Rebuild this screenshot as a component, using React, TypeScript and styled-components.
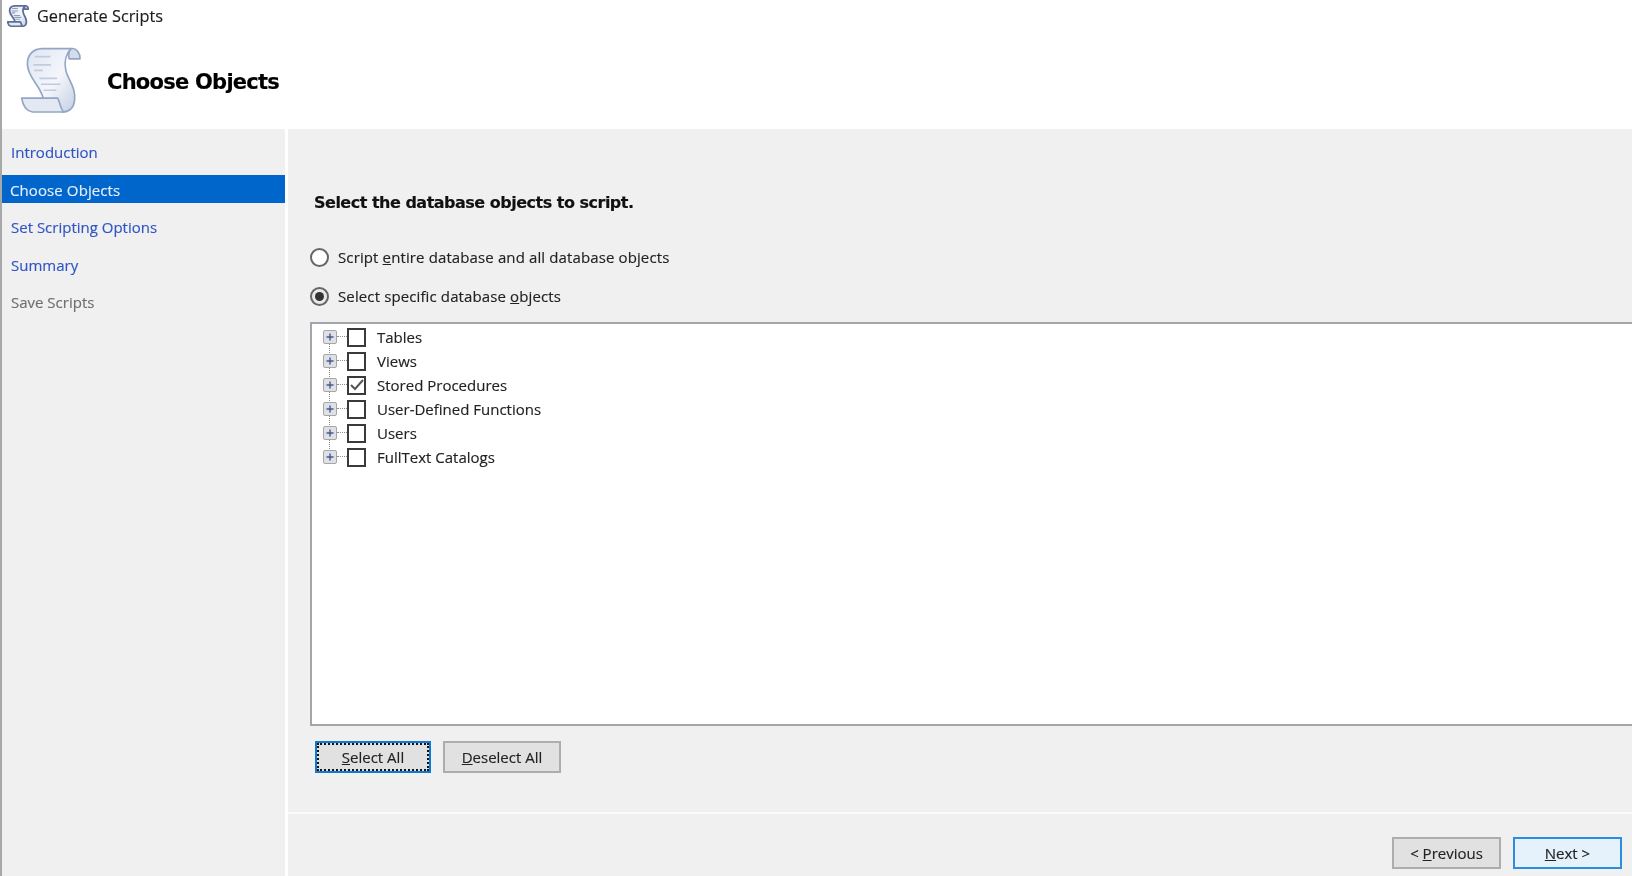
import React from "react";
import styled, { createGlobalStyle } from "styled-components";

const GlobalStyle = createGlobalStyle`
  html, body {
    margin: 0;
    padding: 0;
    height: 100%;
    overflow: hidden;
    background: #ffffff;
  }
  * { box-sizing: border-box; }
`;

const Window = styled.div`
  width: 1632px;
  height: 876px;
  display: flex;
  flex-direction: column;
  overflow: hidden;
  border-left: 2px solid #a8a8a8;
  background: #ffffff;
  font-family: "Open Sans", "Noto Sans", sans-serif;
  font-size: 15px;
  color: #222222;
  -webkit-text-stroke: 0.15px currentColor;
  filter: blur(0.35px);
`;

const TitleBar = styled.div`
  height: 32px;
  display: flex;
  align-items: center;
  gap: 8px;
  padding-left: 5px;
  font-size: 16.3px;
  color: #1c1c1c;
`;

const Header = styled.div`
  height: 97px;
  display: flex;
  align-items: center;
  gap: 25px;
  padding: 0 0 2px 18px;
`;

const PageTitle = styled.h1`
  margin: 4px 0 0;
  font-family: "DejaVu Sans", sans-serif;
  font-size: 21px;
  font-weight: 700;
  color: #000000;
  letter-spacing: -0.75px;
`;

const Body = styled.div`
  flex: 1;
  display: flex;
  gap: 3px;
  min-height: 0;
`;

const Sidebar = styled.nav`
  width: 283px;
  background: #f0f0f0;
  padding-top: 8px;
  display: flex;
  flex-direction: column;
  gap: 9.5px;
`;

const NavItem = styled.div<{ $state?: "active" | "disabled" }>`
  height: 28px;
  display: flex;
  align-items: center;
  padding-top: 2px;
  padding-left: ${(p) => (p.$state === "active" ? "8px" : "9px")};
  letter-spacing: ${(p) => (p.$state === "active" ? "0.1px" : "0")};
  color: ${(p) =>
    p.$state === "active" ? "#e6eefa" : p.$state === "disabled" ? "#6f6f6f" : "#2f55c4"};
  background: ${(p) => (p.$state === "active" ? "#0066cc" : "transparent")};
`;

const Main = styled.main`
  flex: 1;
  min-width: 0;
  background: #f0f0f0;
  display: flex;
  flex-direction: column;
`;

const Content = styled.section`
  height: 685px;
  padding: 64px 0 0 22px;
  margin-right: -8px;
  border-bottom: 2px solid #fbfbfb;
`;

const Heading = styled.h2`
  margin: 0 0 34px 4px;
  height: 20px;
  line-height: 20px;
  font-family: "DejaVu Sans", sans-serif;
  font-size: 16px;
  font-weight: 700;
  letter-spacing: -0.5px;
  color: #111111;
`;

const RadioRow = styled.label`
  height: 20px;
  display: flex;
  align-items: center;
  gap: 9px;
  margin-bottom: 19px;
  letter-spacing: 0.12px;
`;

const RadioDot = styled.span<{ $on?: boolean }>`
  width: 19px;
  height: 19px;
  border-radius: 50%;
  border: 2px solid #666666;
  background: ${(p) => (p.$on ? "#e9e9e9" : "#ffffff")};
  display: flex;
  align-items: center;
  justify-content: center;

  &::after {
    content: "";
    width: 9px;
    height: 9px;
    border-radius: 50%;
    background: ${(p) => (p.$on ? "#333333" : "transparent")};
  }
`;

const TreeBox = styled.div`
  height: 404px;
  margin-top: -3px;
  background: #ffffff;
  border: 2px solid #a2a5a9;
  padding: 1px 0 0 11px;
`;

const TreeRow = styled.div`
  height: 24px;
  display: flex;
  align-items: center;
  line-height: 24px;
`;

const Expander = styled.span<{ $last?: boolean }>`
  position: relative;
  width: 14px;
  height: 14px;
  flex: none;
  border: 1px solid #a6a6a6;
  border-radius: 2px;
  background: #dfe0e5;
  color: #44598f;
  display: flex;
  align-items: center;
  justify-content: center;
  margin-right: 10px;

  &::before {
    content: "";
    position: absolute;
    left: 13px;
    top: 5px;
    width: 10px;
    border-top: 1px dotted #8a8a8a;
  }

  &::after {
    content: "";
    display: ${(p) => (p.$last ? "none" : "block")};
    position: absolute;
    left: 5px;
    top: 13px;
    height: 11px;
    border-left: 1px dotted #8a8a8a;
  }
`;

const CheckBox = styled.span`
  width: 19px;
  height: 19px;
  flex: none;
  border: 2px solid #3a3a3a;
  background: #ffffff;
  margin-right: 11px;
  display: flex;
  align-items: center;
  justify-content: center;
`;

const ButtonRow = styled.div`
  display: flex;
  gap: 12px;
  margin: 15px 0 0 5px;
`;

const Button = styled.button<{ $tone?: "focus" | "hover"; $width: number }>`
  position: relative;
  width: ${(p) => p.$width}px;
  height: 32px;
  padding: 0;
  font: inherit;
  color: #222222;
  cursor: default;
  background: ${(p) => (p.$tone === "hover" ? "#e5f1fb" : "#e1e1e1")};
  border: 2px solid
    ${(p) => (p.$tone === "hover" ? "#2a8de0" : p.$tone === "focus" ? "#0f7ad6" : "#adadad")};

  ${(p) =>
    p.$tone === "focus" &&
    `&::after {
      content: "";
      position: absolute;
      inset: 0;
      border: 2px dotted #111111;
    }`}
`;

const Footer = styled.footer`
  flex: 1;
  display: flex;
  justify-content: flex-end;
  gap: 12px;
  padding: 23px 10px 0 0;
`;

const NAV: { label: string; state?: "active" | "disabled" }[] = [
  { label: "Introduction" },
  { label: "Choose Objects", state: "active" },
  { label: "Set Scripting Options" },
  { label: "Summary" },
  { label: "Save Scripts", state: "disabled" },
];

const TREE = [
  { label: "Tables" },
  { label: "Views" },
  { label: "Stored Procedures", checked: true },
  { label: "User-Defined Functions" },
  { label: "Users" },
  { label: "FullText Catalogs" },
];

function ScrollIcon({ width, height, dark }: { width: number; height: number; dark?: boolean }) {
  const id = dark ? "scrollSmall" : "scrollLarge";
  const stroke = dark ? "#5f7097" : "#94a5c6";
  const sw = dark ? 15 : 5;
  return (
    <svg
      width={width}
      height={height}
      viewBox="60 138 184 206"
      preserveAspectRatio="none"
      style={{ flex: "none" }}
    >
      <defs>
        <linearGradient id={id} x1="0" y1="0" x2="1" y2="1">
          <stop offset="0" stopColor="#dfe5f2" />
          <stop offset="0.55" stopColor="#f4f6fb" />
          <stop offset="1" stopColor="#c3cfe4" />
        </linearGradient>
      </defs>
      <path
        d="M125 146 L212 146 C197 160 190 185 196 212 C203 242 226 262 222 302 C220 325 206 338 187 338 L130 300 C120 255 84 236 82 195 C81 165 98 147 125 146 Z"
        fill={`url(#${id})`}
        stroke={stroke}
        strokeWidth={sw}
        strokeLinejoin="round"
      />
      <path
        d="M212 146 C227 143 239 160 238 177 L206 177 C202 164 204 154 212 146 Z"
        fill="#d5ddec"
        stroke={stroke}
        strokeWidth={sw}
        strokeLinejoin="round"
      />
      <path
        d="M65 296 L172 296 C179 310 180 326 189 338 L97 338 C78 335 68 316 65 296 Z"
        fill="#e3e8f3"
        stroke={stroke}
        strokeWidth={sw}
        strokeLinejoin="round"
      />
      <path
        d="M104 170 L150 170 M100 195 L152 195 M102 212 L128 212 M118 236 L170 236 M122 254 L180 254 M130 272 L168 272"
        stroke={dark ? "#8d9cbc" : "#c2cbdd"}
        strokeWidth={dark ? 10 : 5}
        fill="none"
      />
    </svg>
  );
}

export default function App() {
  return (
    <Window>
      <GlobalStyle />
      <TitleBar>
        <ScrollIcon width={22} height={22} dark />
        Generate Scripts
      </TitleBar>
      <Header>
        <ScrollIcon width={62} height={68} />
        <PageTitle>Choose Objects</PageTitle>
      </Header>
      <Body>
        <Sidebar>
          {NAV.map((n) => (
            <NavItem key={n.label} $state={n.state}>
              {n.label}
            </NavItem>
          ))}
        </Sidebar>
        <Main>
          <Content>
            <Heading>Select the database objects to script.</Heading>
            <RadioRow>
              <RadioDot />
              <span>
                Script <u>e</u>ntire database and all database objects
              </span>
            </RadioRow>
            <RadioRow>
              <RadioDot $on />
              <span>
                Select specific database <u>o</u>bjects
              </span>
            </RadioRow>
            <TreeBox>
              {TREE.map((t, i) => (
                <TreeRow key={t.label}>
                  <Expander $last={i === TREE.length - 1}>
                    <svg width="8" height="8" viewBox="0 0 8 8">
                      <path d="M4 0.5V7.5M0.5 4H7.5" stroke="currentColor" strokeWidth="1.4" />
                    </svg>
                  </Expander>
                  <CheckBox>
                    {t.checked && (
                      <svg width="14" height="12" viewBox="0 0 14 12">
                        <path d="M1 6L5 10L13 1" stroke="#555555" strokeWidth="2" fill="none" />
                      </svg>
                    )}
                  </CheckBox>
                  {t.label}
                </TreeRow>
              ))}
            </TreeBox>
            <ButtonRow>
              <Button $tone="focus" $width={116}>
                <u>S</u>elect All
              </Button>
              <Button $width={118}>
                <u>D</u>eselect All
              </Button>
            </ButtonRow>
          </Content>
          <Footer>
            <Button $width={109}>
              &lt; <u>P</u>revious
            </Button>
            <Button $tone="hover" $width={109}>
              <u>N</u>ext &gt;
            </Button>
          </Footer>
        </Main>
      </Body>
    </Window>
  );
}
